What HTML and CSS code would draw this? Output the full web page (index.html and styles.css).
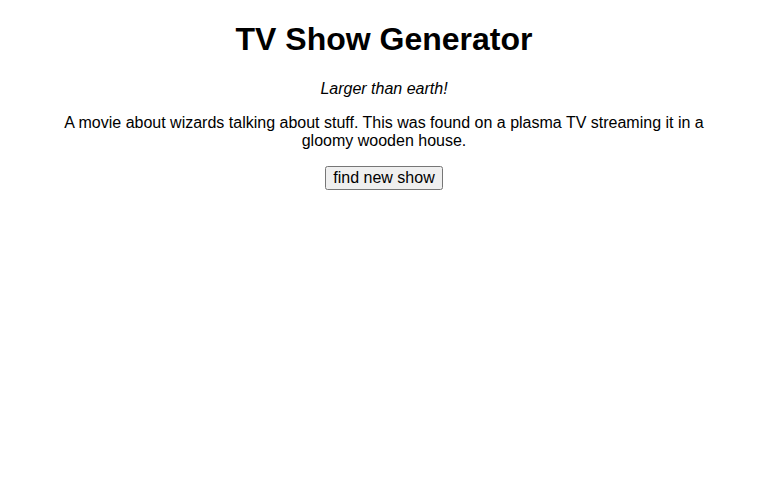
FILE: index.html
```html
<!DOCTYPE html>
<html lang="en">
<head>
  <meta charset="UTF-8">
  <title>TV Show Generator</title>
  <link rel="stylesheet" href="styles.css">
</head>
<body>

  <main class="show">
    <h1>TV Show Generator</h1>

    <p class="tagline">Larger than earth!</p>

    <p class="plot">A movie about wizards talking about stuff. This was found on a plasma TV streaming it in a gloomy wooden house.</p>

    <button class="new-show" type="button">find new show</button>
  </main>

</body>
</html>
```

FILE: styles.css
```css
body {
  font-family: "Liberation Sans", Arial, sans-serif;
  text-align: center;
  color: #000;
  background: #fff;
  margin: 0;
}

.show {
  max-width: 640px;
  margin: 0 auto;
}

h1 {
  font-size: 32px;
}

.tagline {
  font-style: italic;
}

.new-show {
  font-family: "Liberation Sans", Arial, sans-serif;
  font-size: 16px;
}
```
